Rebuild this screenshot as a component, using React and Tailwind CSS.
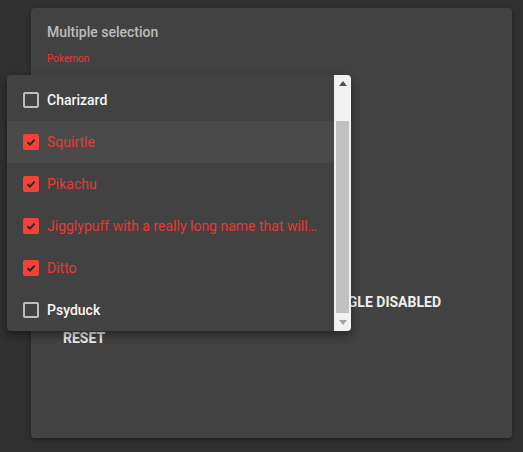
import React from "react";

const items = [
  { name: "Charizard", checked: false },
  { name: "Squirtle", checked: true, hover: true },
  { name: "Pikachu", checked: true },
  { name: "Jigglypuff with a really long name that will…", checked: true },
  { name: "Ditto", checked: true },
  { name: "Psyduck", checked: false },
];

function Box({ checked }) {
  if (!checked) {
    return <div className="w-4 h-4 shrink-0 rounded-[2px] border-2 border-[#bdbdbd]" />;
  }
  return (
    <div className="w-4 h-4 shrink-0 rounded-[2px] bg-[#f44336] flex items-center justify-center">
      <svg width="12" height="12" viewBox="0 0 12 12">
        <path d="M2.5 6.2 L5 8.6 L9.6 3.6" fill="none" stroke="#2b2b2b" strokeWidth="2" />
      </svg>
    </div>
  );
}

export default function App() {
  return (
    <div
      className="w-[523px] h-[452px] bg-[#303030] relative pt-2 pl-[31px] pr-[11px] pb-[14px]"
      style={{ fontFamily: "Roboto, 'Liberation Sans', sans-serif" }}
    >
      <div className="h-full bg-[#424242] rounded shadow-[0_2px_4px_rgba(0,0,0,0.35)] px-4 pt-[15px]">
        <div className="text-sm font-medium text-[#bdbdbd] leading-[18px]">Multiple selection</div>
        <div className="text-[10px] text-[#e53935] mt-[12px] leading-3">Pokemon</div>
        <div className="mt-[227px] flex justify-end pr-[55px]">
          <span className="text-sm font-bold text-[#eeeeee]">TOGGLE DISABLED</span>
        </div>
        <div className="mt-[14px] pl-4">
          <span className="text-sm font-bold text-[#eeeeee]">RESET</span>
        </div>
      </div>

      <div className="absolute left-[7px] top-[75px] w-[344px] h-[256px] bg-[#424242] rounded shadow-[0_4px_10px_rgba(0,0,0,0.45)] flex overflow-hidden">
        <div className="flex-1 min-w-0 pt-1">
          {items.map((it) => (
            <div
              key={it.name}
              className={`h-[42px] flex items-center gap-2 pl-4 pr-3 ${it.hover ? "bg-[#4a4a4a]" : ""}`}
            >
              <Box checked={it.checked} />
              <span
                className={`text-sm whitespace-nowrap -mt-px ${
                  it.checked ? "text-[#e53935]" : "text-[#f5f5f5] font-medium"
                }`}
              >
                {it.name}
              </span>
            </div>
          ))}
        </div>
        <div className="w-[17px] h-full bg-[#f1f1f1] flex flex-col items-center">
          <div className="h-[17px] flex items-center justify-center">
            <svg width="8" height="5" viewBox="0 0 8 5">
              <path d="M0 5 L4 0 L8 5 Z" fill="#505050" />
            </svg>
          </div>
          <div className="w-[13px] mt-[29px] h-[192px] bg-[#c1c1c1]" />
          <div className="flex-1" />
          <div className="h-[17px] flex items-center justify-center">
            <svg width="8" height="5" viewBox="0 0 8 5">
              <path d="M0 0 L8 0 L4 5 Z" fill="#a3a3a3" />
            </svg>
          </div>
        </div>
      </div>
    </div>
  );
}
